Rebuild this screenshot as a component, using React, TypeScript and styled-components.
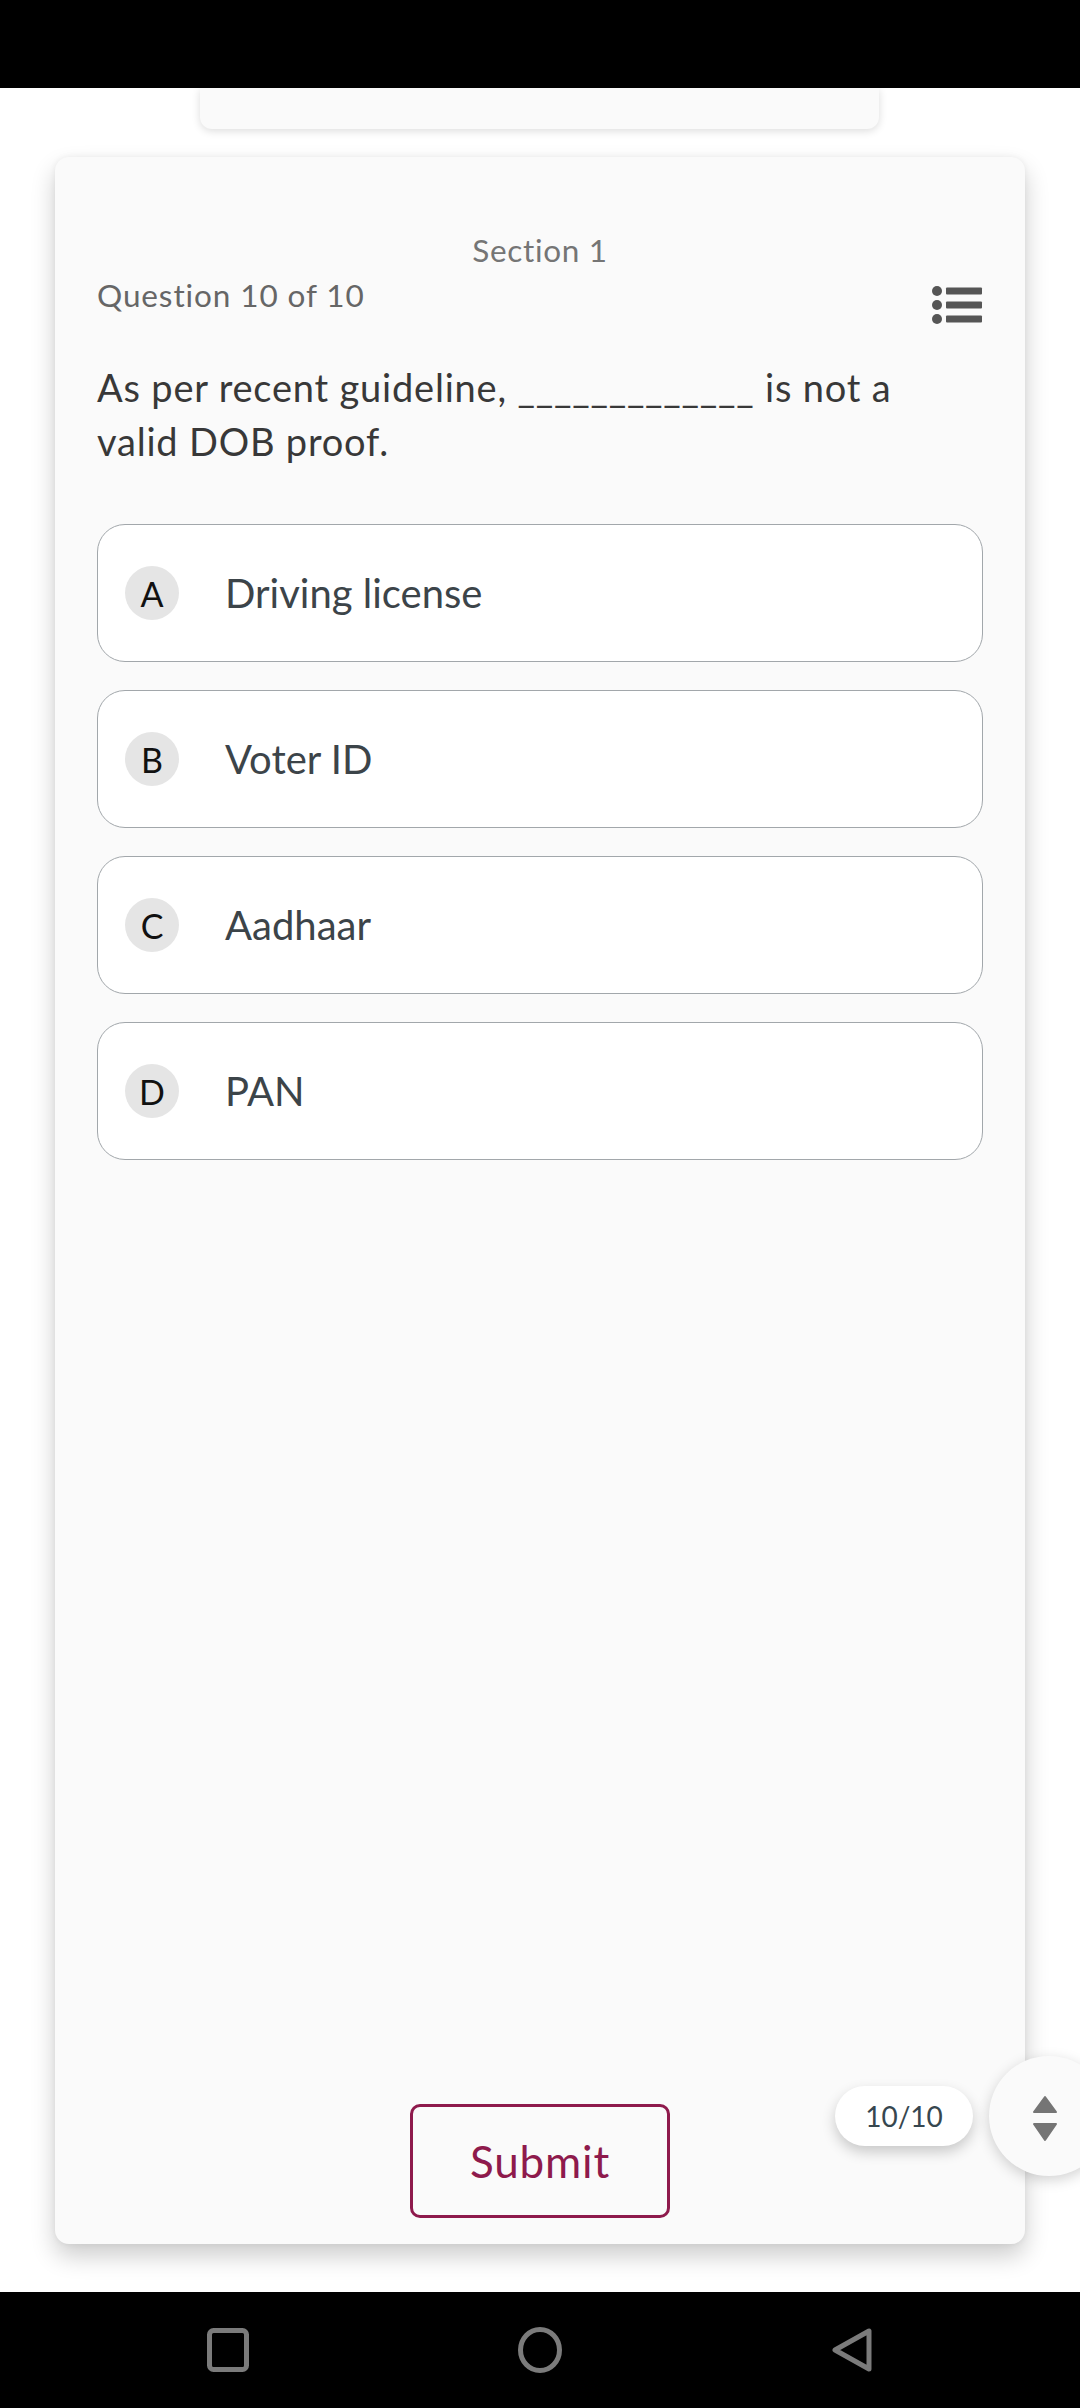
import styled, { createGlobalStyle } from "styled-components";

const GlobalStyle = createGlobalStyle`
  html, body {
    margin: 0;
    padding: 0;
    background: #ffffff;
  }
  body {
    font-family: Lato, "Noto Sans", sans-serif;
  }
  * {
    box-sizing: border-box;
  }
`;

const colors = {
  card: "#fafafa",
  text: "#3c4449",
  muted: "#757575",
  primary: "#8e1a4c",
  navIcon: "#7b7b7b",
};

const Phone = styled.div`
  width: 1080px;
  height: 2408px;
  display: flex;
  flex-direction: column;
  overflow: hidden;
  background: #ffffff;
`;

const StatusBar = styled.div`
  height: 88px;
  flex-shrink: 0;
  background: #000000;
`;

const Screen = styled.main`
  position: relative;
  flex: 1;
  display: flex;
  flex-direction: column;
`;

const PrevCard = styled.div`
  margin-left: 200px;
  width: 679px;
  height: 41px;
  background: ${colors.card};
  border-radius: 0 0 12px 12px;
  box-shadow: 0 2px 8px rgba(0, 0, 0, 0.14);
`;

const Card = styled.section`
  margin: 28px 0 0 55px;
  width: 970px;
  height: 2087px;
  padding: 74px 42px 26px;
  display: flex;
  flex-direction: column;
  background: ${colors.card};
  border-radius: 14px;
  box-shadow: 0 12px 24px rgba(0, 0, 0, 0.2), 0 0 6px rgba(0, 0, 0, 0.06);
`;

const SectionLabel = styled.div`
  text-align: center;
  font-size: 31.5px;
  line-height: 38px;
  letter-spacing: 0.7px;
  color: ${colors.muted};
`;

const QuestionRow = styled.div`
  margin-top: 7px;
  display: flex;
  justify-content: space-between;
  align-items: flex-start;
`;

const QuestionCount = styled.div`
  font-size: 31.5px;
  line-height: 38px;
  letter-spacing: 0.9px;
  color: #666666;
`;

const ListButton = styled.svg`
  margin-top: 9px;
  flex-shrink: 0;
`;

const QuestionText = styled.p`
  margin: 35px 0 0;
  max-width: 830px;
  font-size: 38px;
  line-height: 54px;
  letter-spacing: 0.8px;
  color: #383838;
`;

const OptionList = styled.div`
  margin-top: 56px;
  display: flex;
  flex-direction: column;
  gap: 28px;
`;

const Option = styled.div`
  height: 138px;
  padding-left: 27px;
  display: flex;
  align-items: center;
  background: #ffffff;
  border: 1.5px solid #a2a7ab;
  border-radius: 28px;
`;

const OptionBadge = styled.span`
  width: 54px;
  height: 54px;
  flex-shrink: 0;
  display: flex;
  align-items: center;
  justify-content: center;
  border-radius: 50%;
  background: #e5e5e5;
  font-size: 34px;
  color: #111111;
`;

const OptionLabel = styled.span`
  margin-left: 46px;
  font-size: 40px;
  color: ${colors.text};
`;

const Spacer = styled.div`
  flex: 1;
`;

const Footer = styled.div`
  display: flex;
  justify-content: center;
`;

const SubmitButton = styled.button`
  width: 260px;
  height: 114px;
  border: 3px solid ${colors.primary};
  border-radius: 10px;
  background: transparent;
  font-family: inherit;
  font-size: 44px;
  font-weight: 400;
  letter-spacing: 0.8px;
  color: ${colors.primary};
`;

const Counter = styled.div`
  position: absolute;
  left: 835px;
  top: 1998px;
  width: 138px;
  height: 60px;
  display: flex;
  align-items: center;
  justify-content: center;
  border-radius: 30px;
  background: #ffffff;
  box-shadow: 0 6px 14px rgba(0, 0, 0, 0.2);
  font-size: 28px;
  color: #37474f;
`;

const ScrollButton = styled.div`
  position: absolute;
  left: 989px;
  top: 1968px;
  width: 120px;
  height: 120px;
  border-radius: 50%;
  background: ${colors.card};
  box-shadow: 0 4px 14px rgba(0, 0, 0, 0.18);
`;

const NavBar = styled.nav`
  height: 116px;
  flex-shrink: 0;
  display: flex;
  align-items: center;
  justify-content: center;
  gap: 264px;
  background: #000000;
`;

const NavSlot = styled.div`
  width: 48px;
  display: flex;
  justify-content: center;
`;

const options = [
  { key: "A", label: "Driving license" },
  { key: "B", label: "Voter ID" },
  { key: "C", label: "Aadhaar" },
  { key: "D", label: "PAN" },
];

const ListIcon = () => (
  <ListButton width="52" height="40" viewBox="0 0 52 40">
    {[6, 20, 34].map((y) => (
      <g key={y} fill="#555555">
        <circle cx="6" cy={y} r="5" />
        <rect x="15" y={y - 3.5} width="36" height="7" rx="1" />
      </g>
    ))}
  </ListButton>
);

export default function App() {
  return (
    <>
      <GlobalStyle />
      <Phone>
        <StatusBar />
        <Screen>
          <PrevCard />
          <Card>
            <SectionLabel>Section 1</SectionLabel>
            <QuestionRow>
              <QuestionCount>Question 10 of 10</QuestionCount>
              <ListIcon />
            </QuestionRow>
            <QuestionText>
              As per recent guideline, _____________ is not a valid DOB proof.
            </QuestionText>
            <OptionList>
              {options.map((o) => (
                <Option key={o.key}>
                  <OptionBadge>{o.key}</OptionBadge>
                  <OptionLabel>{o.label}</OptionLabel>
                </Option>
              ))}
            </OptionList>
            <Spacer />
            <Footer>
              <SubmitButton>Submit</SubmitButton>
            </Footer>
          </Card>
          <Counter>10/10</Counter>
          <ScrollButton>
            <svg width="120" height="120" viewBox="0 0 120 120">
              <g fill="#757575" stroke="#757575" strokeWidth="2" strokeLinejoin="round">
                <path d="M56 41 L67 56 L45 56 Z" />
                <path d="M45 68 L67 68 L56 84 Z" />
              </g>
            </svg>
          </ScrollButton>
        </Screen>
        <NavBar>
          <NavSlot>
            <svg width="42" height="44" viewBox="0 0 42 44">
              <rect x="2.5" y="2.5" width="37" height="39" rx="4" fill="none" stroke={colors.navIcon} strokeWidth="5" />
            </svg>
          </NavSlot>
          <NavSlot>
            <svg width="44" height="46" viewBox="0 0 44 46">
              <ellipse cx="22" cy="23" rx="19.5" ry="20.5" fill="none" stroke={colors.navIcon} strokeWidth="5" />
            </svg>
          </NavSlot>
          <NavSlot>
            <svg width="40" height="44" viewBox="0 0 40 44">
              <path d="M3 22 L37 3 L37 41 Z" fill="none" stroke={colors.navIcon} strokeWidth="5" strokeLinejoin="round" />
            </svg>
          </NavSlot>
        </NavBar>
      </Phone>
    </>
  );
}
